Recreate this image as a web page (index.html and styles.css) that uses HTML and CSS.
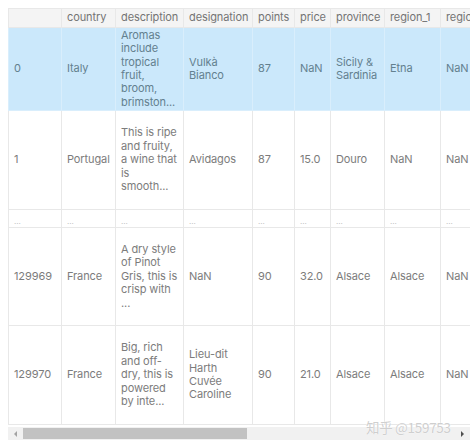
FILE: index.html
```html
<!DOCTYPE html>
<html>
<head>
<meta charset="utf-8">
<link rel="stylesheet" href="styles.css">
</head>
<body>
<div class="frame">
  <div class="viewport">
    <table class="df">
      <colgroup>
        <col class="c-idx"><col class="c-country"><col class="c-desc"><col class="c-desig"><col class="c-points"><col class="c-price"><col class="c-prov"><col class="c-r1"><col class="c-r2">
      </colgroup>
      <thead>
        <tr class="head">
          <th></th><th>country</th><th>description</th><th>designation</th><th>points</th><th>price</th><th>province</th><th>region_1</th><th>region_2</th>
        </tr>
      </thead>
      <tbody>
        <tr class="r0 sel">
          <td>0</td><td>Italy</td><td>Aromas include tropical fruit, broom, brimston...</td><td>Vulkà Bianco</td><td>87</td><td>NaN</td><td>Sicily &amp; Sardinia</td><td>Etna</td><td>NaN</td>
        </tr>
        <tr class="r1">
          <td>1</td><td class="nowrap">Portugal</td><td>This is ripe and fruity, a wine that is smooth...</td><td>Avidagos</td><td>87</td><td>15.0</td><td>Douro</td><td>NaN</td><td>NaN</td>
        </tr>
        <tr class="dots">
          <td>...</td><td>...</td><td>...</td><td>...</td><td>...</td><td>...</td><td>...</td><td>...</td><td>...</td>
        </tr>
        <tr class="r2">
          <td>129969</td><td>France</td><td>A dry style of Pinot Gris, this is crisp with ...</td><td>NaN</td><td>90</td><td>32.0</td><td>Alsace</td><td>Alsace</td><td>NaN</td>
        </tr>
        <tr class="r3">
          <td>129970</td><td>France</td><td>Big, rich and off-dry, this is powered by inte...</td><td>Lieu-dit Harth Cuvée Caroline</td><td>90</td><td>21.0</td><td>Alsace</td><td>Alsace</td><td>NaN</td>
        </tr>
      </tbody>
    </table>
  </div>
  <div class="hscroll">
    <div class="btn left"><span class="tri-l"></span></div>
    <div class="track"><div class="thumb"></div></div>
    <div class="btn right"><span class="tri-r"></span></div>
  </div>
  <div class="watermark">知乎 @159753</div>
</div>
</body>
</html>
```
FILE: styles.css
```css
html, body {
  margin: 0;
  padding: 0;
  background: #ffffff;
}
body {
  padding: 8px 4px 0 8px;
  font-family: Inter, "Noto Sans", "Liberation Sans", sans-serif;
}
.frame {
  position: relative;
  width: 462px;
}
.viewport {
  overflow: hidden;
  width: 462px;
}
.df {
  border-collapse: collapse;
  table-layout: fixed;
  width: 520px;
  font-size: 11px;
  line-height: 13.4px;
  color: #7c7c7c;
  letter-spacing: -0.1px;
}
.c-idx { width: 53px; }
.c-country { width: 54px; }
.c-desc { width: 68px; }
.c-desig { width: 69px; }
.c-points { width: 42px; }
.c-price { width: 36px; }
.c-prov { width: 54px; }
.c-r1 { width: 56px; }
.c-r2 { width: 88px; }
.df th, .df td {
  border: 1px solid #e8e8e8;
  padding: 0 4px 0 5px;
  text-align: left;
  vertical-align: middle;
  white-space: normal;
}
.df td.nowrap {
  white-space: nowrap;
}
.df th {
  font-weight: normal;
  background: #f4f4f4;
  height: 18px;
  white-space: nowrap;
  color: #747474;
}
.sel td {
  background: #cbe8fb;
  color: #63808f;
  border-color: #d9eefc;
}
.r0 td { height: 82px; }
.r1 td { height: 98px; }
.dots td {
  height: 16px;
  color: #bdbdbd;
  font-size: 8px;
  line-height: 10px;
  vertical-align: bottom;
  padding-bottom: 1px;
}
.r2 td { height: 97px; }
.r3 td { height: 98px; }
.hscroll {
  display: flex;
  height: 13px;
  margin-top: 2px;
  background: #f1f1f1;
}
.btn {
  width: 15px;
  flex: 0 0 15px;
  display: flex;
  align-items: center;
  justify-content: center;
  background: #f1f1f1;
}
.tri-l {
  width: 0;
  height: 0;
  border-top: 3px solid transparent;
  border-bottom: 3px solid transparent;
  border-right: 3px solid #a3a3a3;
}
.tri-r {
  width: 0;
  height: 0;
  border-top: 3px solid transparent;
  border-bottom: 3px solid transparent;
  border-left: 3px solid #505050;
}
.track {
  flex: 1;
  display: flex;
  align-items: stretch;
  padding: 1px 0;
}
.thumb {
  width: 224px;
  background: #c2c2c2;
}
.watermark {
  position: absolute;
  left: 358px;
  top: 409px;
  font-family: "Noto Sans CJK SC", "Noto Sans", sans-serif;
  font-size: 13.5px;
  color: #cfcfcf;
  text-shadow: 0 0 1px #ffffff, 0 0 1px #ffffff;
  white-space: nowrap;
  letter-spacing: -0.3px;
}
```
